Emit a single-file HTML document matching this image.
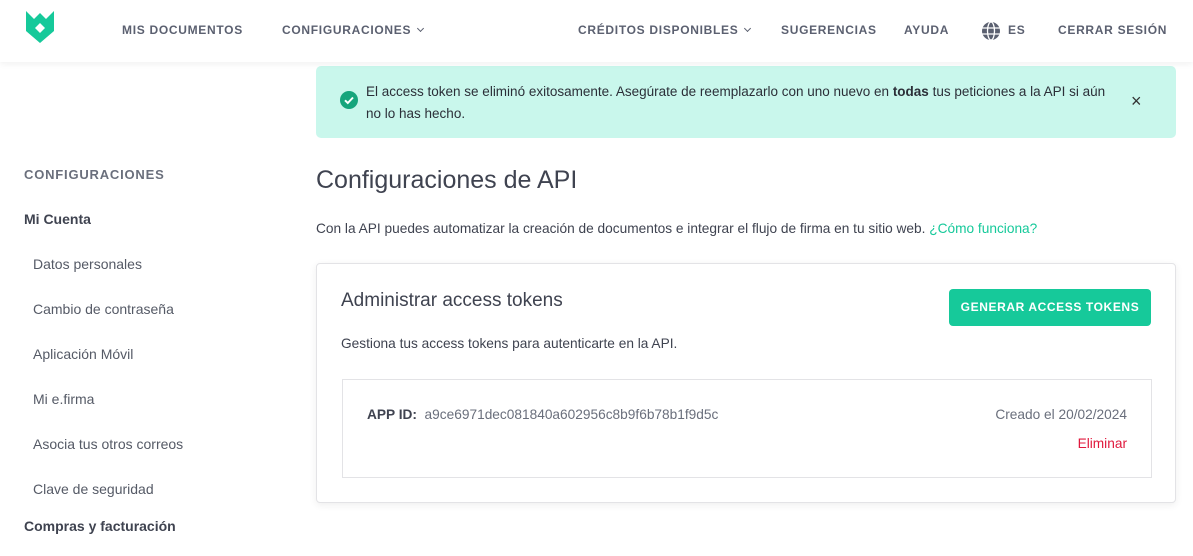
<!DOCTYPE html>
<html><head><meta charset="utf-8"><style>
*{box-sizing:border-box;margin:0;padding:0}
body{width:1193px;height:556px;overflow:hidden;background:#fff;font-family:"Liberation Sans",sans-serif;color:#3f4350;position:relative}
.hdr{position:absolute;left:0;top:0;width:1193px;height:62px;background:#fff;box-shadow:0 2px 6px rgba(0,0,0,.06);z-index:2}
.nav{position:absolute;top:23px;font-size:12px;font-weight:bold;letter-spacing:.7px;color:#5b6070;white-space:nowrap}
.chev{display:inline-block;width:5px;height:5px;border-right:1.6px solid #5b6070;border-bottom:1.6px solid #5b6070;transform:rotate(45deg);margin-left:7px;position:relative;top:-3px}
.side{position:absolute;left:0;top:62px;width:300px;height:494px;background:#fff}
.s{position:absolute;white-space:nowrap}
.alert{position:absolute;left:316px;top:66px;width:860px;height:72px;background:#c9f7ec;border-radius:5px;font-size:13.5px;line-height:22px;color:#2b2f38}
.card{position:absolute;left:316px;top:263px;width:860px;height:240px;border:1px solid #e3e3e6;border-radius:4px;background:#fff;box-shadow:0 2px 8px rgba(0,0,0,.07)}
.inner{position:absolute;left:25px;top:115px;width:810px;height:99px;border:1px solid #e3e3e6}
.btn{position:absolute;left:632px;top:25px;width:202px;height:37px;background:#16c99a;border-radius:4px;color:#fff;font-size:12px;font-weight:bold;letter-spacing:.6px;text-align:center;line-height:37px}
</style></head><body>
<div class="hdr">
<svg style="position:absolute;left:26px;top:11px" width="28" height="32" viewBox="0 0 28 32"><path d="M0 0 L8 8 L14 2 L20 8 L28 0 L28 20 L14 32 L0 20 Z" fill="#16c99a"/><path d="M14 12 L19 17 L14 22 L9 17 Z" fill="#fff"/></svg>
<div class="nav" style="left:122px">MIS DOCUMENTOS</div>
<div class="nav" style="left:282px">CONFIGURACIONES<span class="chev"></span></div>
<div class="nav" style="left:578px">CRÉDITOS DISPONIBLES<span class="chev"></span></div>
<div class="nav" style="left:781px">SUGERENCIAS</div>
<div class="nav" style="left:904px">AYUDA</div>
<svg style="position:absolute;left:981px;top:21px" width="20" height="20" viewBox="0 0 20 20"><circle cx="10" cy="10" r="9" fill="#5b6070"/><g stroke="#fff" stroke-width="1.3" fill="none"><line x1="1" y1="7" x2="19" y2="7"/><line x1="1" y1="13" x2="19" y2="13"/><ellipse cx="10" cy="10" rx="3.5" ry="9"/></g></svg>
<div class="nav" style="left:1008px">ES</div>
<div class="nav" style="left:1058px">CERRAR SESIÓN</div>
</div>
<div class="side">
<div class="s" style="left:24px;top:105px;font-size:13px;font-weight:bold;letter-spacing:.8px;color:#6a6f7c">CONFIGURACIONES</div>
<div class="s" style="left:24px;top:149px;font-size:14px;font-weight:bold;color:#3f4350">Mi Cuenta</div>
<div class="s" style="left:33px;top:194px;font-size:14px;color:#555a66">Datos personales</div>
<div class="s" style="left:33px;top:239px;font-size:14px;color:#555a66">Cambio de contraseña</div>
<div class="s" style="left:33px;top:284px;font-size:14px;color:#555a66">Aplicación Móvil</div>
<div class="s" style="left:33px;top:329px;font-size:14px;color:#555a66">Mi e.firma</div>
<div class="s" style="left:33px;top:374px;font-size:14px;color:#555a66">Asocia tus otros correos</div>
<div class="s" style="left:33px;top:419px;font-size:14px;color:#555a66">Clave de seguridad</div>
<div class="s" style="left:24px;top:456px;font-size:14px;font-weight:bold;color:#3f4350">Compras y facturación</div>
</div>
<div class="alert">
<svg style="position:absolute;left:24px;top:25px" width="18" height="18" viewBox="0 0 18 18"><circle cx="9" cy="9" r="9" fill="#16a57c"/><path d="M5 9.3 L7.8 12 L13 6.5" stroke="#fff" stroke-width="2" fill="none"/></svg>
<div style="position:absolute;left:50px;top:15px;width:750px">El access token se eliminó exitosamente. Asegúrate de reemplazarlo con uno nuevo en <b>todas</b> tus peticiones a la API si aún no lo has hecho.</div>
<div style="position:absolute;left:815px;top:24px;font-size:18px;line-height:22px;color:#333">×</div>
</div>
<div class="s" style="left:316px;top:166px;font-size:25px;color:#3f4350">Configuraciones de API</div>
<div class="s" style="left:316px;top:221px;font-size:13.7px;color:#3f4350">Con la API puedes automatizar la creación de documentos e integrar el flujo de firma en tu sitio web. <span style="color:#16c99a">¿Cómo funciona?</span></div>
<div class="card">
<div class="s" style="left:24px;top:26px;font-size:19px;color:#3f4350">Administrar access tokens</div>
<div class="btn">GENERAR ACCESS TOKENS</div>
<div class="s" style="left:24px;top:72px;font-size:13.7px;color:#3f4350">Gestiona tus access tokens para autenticarte en la API.</div>
<div class="inner">
<div class="s" style="left:24px;top:27px;font-size:13.7px;color:#6a6f7c"><b style="color:#3f4350">APP ID:</b>&nbsp; a9ce6971dec081840a602956c8b9f6b78b1f9d5c</div>
<div class="s" style="right:24px;top:27px;font-size:13.7px;color:#6a6f7c">Creado el 20/02/2024</div>
<div class="s" style="right:24px;top:56px;font-size:13.7px;color:#e0193d">Eliminar</div>
</div>
</div>
</body></html>
